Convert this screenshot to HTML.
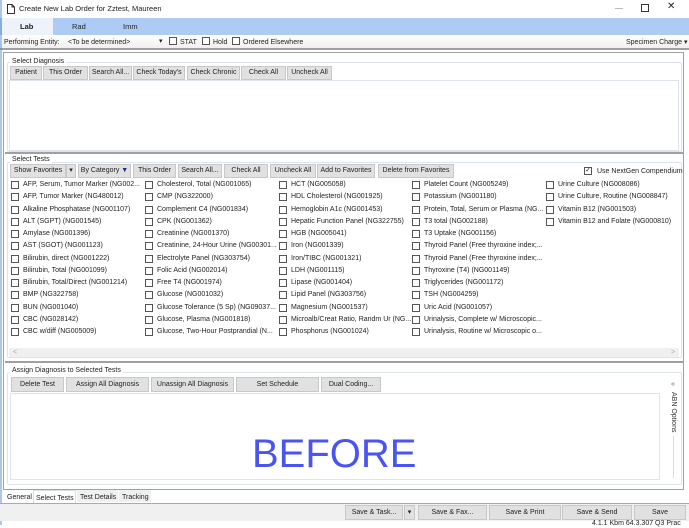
<!DOCTYPE html>
<html><head><meta charset="utf-8"><style>
*{box-sizing:border-box;margin:0;padding:0}
body{width:689px;height:525px;position:relative;overflow:hidden;background:#fff;font-family:"Liberation Sans",sans-serif;font-size:7px;color:#222}
.a{position:absolute}
.btn{position:absolute;height:14px;background:#e1e1e1;border:1px solid #c8c8c8;text-align:center;line-height:12px;font-size:7px;color:#222;white-space:nowrap}
.cb{position:absolute;width:8px;height:8px;border:1px solid #555;background:#fff}
.t{position:absolute;white-space:nowrap;font-size:7px;line-height:9px}
.grp{position:absolute;border:1px solid #dde4ee;border-radius:2px}
.lbl{position:absolute;background:#fff;padding:0 2px;font-size:7px;line-height:9px}
</style></head><body>
<div class="a" style="left:0;top:0;width:689px;height:18px;background:#fff"></div>
<svg class="a" style="left:7px;top:4px" width="8" height="10"><path d="M0.5 0.5H5L7.5 3V9.5H0.5Z M5 0.5V3H7.5" fill="none" stroke="#333" stroke-width="1"/></svg>
<div class="t" style="left:19px;top:4px;font-size:7.5px">Create New Lab Order for Zztest, Maureen</div>
<div class="a" style="left:615px;top:8px;width:8px;height:1px;background:#bbb"></div>
<div class="a" style="left:641px;top:4px;width:8px;height:8px;border:1px solid #333"></div>
<div class="t" style="left:667px;top:2px;font-size:10px">✕</div>
<div class="a" style="left:0;top:18px;width:689px;height:17px;background:#aecbf5"></div>
<div class="a" style="left:2px;top:18px;width:51px;height:17px;background:#eef3fb"></div>
<div class="t" style="left:20px;top:22px;font-weight:bold;font-size:7.5px">Lab</div>
<div class="t" style="left:72px;top:22px;font-size:7.5px">Rad</div>
<div class="t" style="left:123px;top:22px;font-size:7.5px">Imm</div>
<div class="a" style="left:0;top:35px;width:689px;height:15px;background:linear-gradient(#fff,#f0f0f0);border-bottom:2px solid #a0a0a0"></div>
<div class="t" style="left:4px;top:38px">Performing Entity:</div>
<div class="t" style="left:68px;top:38px">&lt;To be determined&gt;</div>
<div class="t" style="left:159px;top:37px">▾</div>
<div class="cb" style="left:169px;top:37px"></div><div class="t" style="left:180px;top:38px">STAT</div>
<div class="cb" style="left:202px;top:37px"></div><div class="t" style="left:213px;top:38px">Hold</div>
<div class="cb" style="left:232px;top:37px"></div><div class="t" style="left:243px;top:38px">Ordered Elsewhere</div>
<div class="t" style="left:626px;top:38px">Specimen Charge ▾</div>
<div class="a" style="left:3px;top:52px;width:681px;height:438px;border:1px solid #a0a0a0"></div>
<div class="a" style="left:0;top:0;width:2px;height:525px;background:#5a8fd0;opacity:.5"></div>
<div class="grp" style="left:7px;top:62px;width:675px;height:90px"></div>
<div class="lbl" style="left:10px;top:57px">Select Diagnosis</div>
<div class="btn" style="left:10px;top:66px;width:32px">Patient</div>
<div class="btn" style="left:43px;top:66px;width:45px">This Order</div>
<div class="btn" style="left:89px;top:66px;width:43px">Search All...</div>
<div class="btn" style="left:133px;top:66px;width:52px">Check Today's</div>
<div class="btn" style="left:187px;top:66px;width:53px">Check Chronic</div>
<div class="btn" style="left:241px;top:66px;width:45px">Check All</div>
<div class="btn" style="left:287px;top:66px;width:45px">Uncheck All</div>
<div class="a" style="left:9px;top:80px;width:670px;height:71px;border:1px solid #dde4ee"></div>
<div class="a" style="left:5px;top:152px;width:678px;height:2px;background:#a0a0a0"></div>
<div class="grp" style="left:7px;top:162px;width:675px;height:196px"></div>
<div class="lbl" style="left:10px;top:155px">Select Tests</div>
<div class="btn" style="left:10px;top:164px;width:56px">Show Favorites</div>
<div class="btn" style="left:66px;top:164px;width:10px">▾</div>
<div class="btn" style="left:78px;top:164px;width:53px">By Category <span style="color:#1a2a9a">▼</span></div>
<div class="btn" style="left:133px;top:164px;width:43px">This Order</div>
<div class="btn" style="left:178px;top:164px;width:44px">Search All...</div>
<div class="btn" style="left:224px;top:164px;width:44px">Check All</div>
<div class="btn" style="left:270px;top:164px;width:46px">Uncheck All</div>
<div class="btn" style="left:317px;top:164px;width:58px">Add to Favorites</div>
<div class="btn" style="left:378px;top:164px;width:76px">Delete from Favorites</div>
<div class="cb" style="left:584px;top:167px;font-size:7px;line-height:6px;text-align:center">✓</div>
<div class="t" style="left:597px;top:167px">Use NextGen Compendium</div>
<div id="list"></div>
<div class="a" style="left:9px;top:348px;width:670px;height:9px;background:#f0f0f0"></div>
<div class="t" style="left:13px;top:348px;color:#aaa">&lt;</div>
<div class="t" style="left:671px;top:348px;color:#aaa">&gt;</div>
<div class="a" style="left:5px;top:361px;width:678px;height:2px;background:#a0a0a0"></div>
<div class="grp" style="left:7px;top:372px;width:675px;height:113px"></div>
<div class="lbl" style="left:10px;top:366px">Assign Diagnosis to Selected Tests</div>
<div class="btn" style="left:11px;top:377px;width:53px;height:15px;line-height:13px">Delete Test</div>
<div class="btn" style="left:66px;top:377px;width:83px;height:15px;line-height:13px">Assign All Diagnosis</div>
<div class="btn" style="left:151px;top:377px;width:83px;height:15px;line-height:13px">Unassign All Diagnosis</div>
<div class="btn" style="left:236px;top:377px;width:83px;height:15px;line-height:13px">Set Schedule</div>
<div class="btn" style="left:321px;top:377px;width:60px;height:15px;line-height:13px">Dual Coding...</div>
<div class="a" style="left:10px;top:393px;width:650px;height:87px;border:1px solid #dde4ee"></div>
<div class="t" style="left:252px;top:432px;font-size:40px;line-height:44px;color:#4a55f0">BEFORE</div>
<div class="t" style="left:671px;top:380px;color:#666">«</div>
<div class="t" style="left:668px;top:392px;writing-mode:vertical-rl;color:#333;line-height:10px">ABN Options</div>
<div class="a" style="left:673px;top:436px;width:1px;height:42px;background:#ddd"></div>
<div class="t" style="left:7px;top:493px">General</div>
<div class="a" style="left:33px;top:490px;width:43px;height:13px;background:#fff;border:1px solid #ddd;border-bottom:none"></div>
<div class="t" style="left:36px;top:494px">Select Tests</div>
<div class="a" style="left:77px;top:490px;width:41px;height:12px;background:#f0f0f0"></div>
<div class="t" style="left:80px;top:493px">Test Details</div>
<div class="a" style="left:119px;top:490px;width:32px;height:12px;background:#f0f0f0"></div>
<div class="t" style="left:122px;top:493px">Tracking</div>
<div class="a" style="left:0;top:503px;width:689px;height:18px;background:#f0f0f0;border-top:1px solid #aaa"></div>
<div class="btn" style="left:345px;top:505px;width:58px;height:15px;line-height:13px">Save &amp; Task...</div>
<div class="btn" style="left:404px;top:505px;width:11px;height:15px;line-height:13px">▾</div>
<div class="btn" style="left:418px;top:505px;width:69px;height:15px;line-height:13px">Save &amp; Fax...</div>
<div class="btn" style="left:489px;top:505px;width:72px;height:15px;line-height:13px">Save &amp; Print</div>
<div class="btn" style="left:562px;top:505px;width:70px;height:15px;line-height:13px">Save &amp; Send</div>
<div class="btn" style="left:634px;top:505px;width:52px;height:15px;line-height:13px">Save</div>
<div class="t" style="left:592px;top:519px;font-size:7px">4.1.1 Kbm 64.3.307  Q3 Prac</div>
<script>
var cols=[[11,["AFP, Serum, Tumor Marker (NG002...","AFP, Tumor Marker (NG480012)","Alkaline Phosphatase (NG001107)","ALT (SGPT) (NG001545)","Amylase (NG001396)","AST (SGOT) (NG001123)","Bilirubin, direct (NG001222)","Bilirubin, Total (NG001099)","Bilirubin, Total/Direct (NG001214)","BMP (NG322758)","BUN (NG001040)","CBC (NG028142)","CBC w/diff (NG005009)"]],
[145,["Cholesterol, Total (NG001065)","CMP (NG322000)","Complement C4 (NG001834)","CPK (NG001362)","Creatinine (NG001370)","Creatinine, 24-Hour Urine (NG00301...","Electrolyte Panel (NG303754)","Folic Acid (NG002014)","Free T4 (NG001974)","Glucose (NG001032)","Glucose Tolerance (5 Sp) (NG09037...","Glucose, Plasma (NG001818)","Glucose, Two-Hour Postprandial (N..."]],
[279,["HCT (NG005058)","HDL Cholesterol (NG001925)","Hemoglobin A1c (NG001453)","Hepatic Function Panel (NG322755)","HGB (NG005041)","Iron (NG001339)","Iron/TIBC (NG001321)","LDH (NG001115)","Lipase (NG001404)","Lipid Panel (NG303756)","Magnesium (NG001537)","Microalb/Creat Ratio, Randm Ur (NG...","Phosphorus (NG001024)"]],
[412,["Platelet Count (NG005249)","Potassium (NG001180)","Protein, Total, Serum or Plasma (NG...","T3 total (NG002188)","T3 Uptake (NG001156)","Thyroid Panel (Free thyroxine index;...","Thyroid Panel (Free thyroxine index;...","Thyroxine (T4) (NG001149)","Triglycerides (NG001172)","TSH (NG004259)","Uric Acid (NG001057)","Urinalysis, Complete w/ Microscopic...","Urinalysis, Routine w/ Microscopic o..."]],
[546,["Urine Culture (NG008086)","Urine Culture, Routine (NG008847)","Vitamin B12 (NG001503)","Vitamin B12 and Folate (NG000810)"]]];
var h="";cols.forEach(function(c){c[1].forEach(function(s,i){var y=180+i*12.25;h+='<div class="cb" style="left:'+c[0]+'px;top:'+(y+1)+'px"></div><div class="t" style="left:'+(c[0]+12)+'px;top:'+y+'px">'+s+'</div>';});});
document.getElementById("list").innerHTML=h;
</script>
</body></html>
